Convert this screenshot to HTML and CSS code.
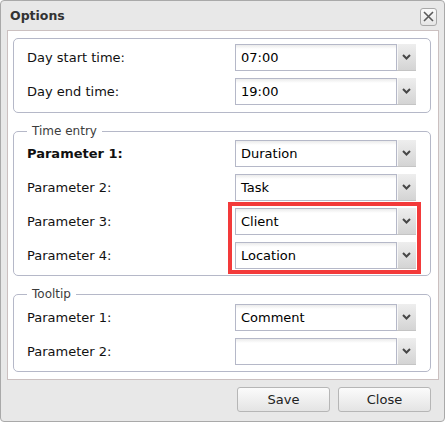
FILE: index.html
```html
<!DOCTYPE html>
<html>
<head>
<meta charset="utf-8">
<link rel="stylesheet" href="styles.css">
</head>
<body>
<div class="window">
  <div class="titlebar">
    <span class="title">Options</span>
    <span class="tool"><svg width="11" height="11" viewBox="0 0 11 11"><path d="M1 1 L10 10 M10 1 L1 10" stroke="#5a5a5a" stroke-width="1.6" fill="none"/></svg></span>
  </div>
  <div class="body">
    <fieldset class="group plain">
      <div class="rows">
        <div class="row"><label>Day start time:</label><div class="combo"><div class="field">07:00</div><div class="trigger"><svg width="9" height="6" viewBox="0 0 9 6"><path d="M1 1 L4.5 4.5 L8 1" stroke="#474747" stroke-width="2" fill="none"/></svg></div></div></div>
        <div class="row"><label>Day end time:</label><div class="combo"><div class="field">19:00</div><div class="trigger"><svg width="9" height="6" viewBox="0 0 9 6"><path d="M1 1 L4.5 4.5 L8 1" stroke="#474747" stroke-width="2" fill="none"/></svg></div></div></div>
      </div>
    </fieldset>
    <fieldset class="group entry">
      <legend>Time entry</legend>
      <div class="rows">
        <div class="row"><label class="strong">Parameter 1:</label><div class="combo"><div class="field">Duration</div><div class="trigger"><svg width="9" height="6" viewBox="0 0 9 6"><path d="M1 1 L4.5 4.5 L8 1" stroke="#474747" stroke-width="2" fill="none"/></svg></div></div></div>
        <div class="row"><label>Parameter 2:</label><div class="combo"><div class="field">Task</div><div class="trigger"><svg width="9" height="6" viewBox="0 0 9 6"><path d="M1 1 L4.5 4.5 L8 1" stroke="#474747" stroke-width="2" fill="none"/></svg></div></div></div>
        <div class="row"><label>Parameter 3:</label><div class="combo"><div class="field">Client</div><div class="trigger"><svg width="9" height="6" viewBox="0 0 9 6"><path d="M1 1 L4.5 4.5 L8 1" stroke="#474747" stroke-width="2" fill="none"/></svg></div></div></div>
        <div class="row"><label>Parameter 4:</label><div class="combo"><div class="field">Location</div><div class="trigger"><svg width="9" height="6" viewBox="0 0 9 6"><path d="M1 1 L4.5 4.5 L8 1" stroke="#474747" stroke-width="2" fill="none"/></svg></div></div></div>
      </div>
    </fieldset>
    <fieldset class="group tooltip">
      <legend>Tooltip</legend>
      <div class="rows">
        <div class="row"><label>Parameter 1:</label><div class="combo"><div class="field">Comment</div><div class="trigger"><svg width="9" height="6" viewBox="0 0 9 6"><path d="M1 1 L4.5 4.5 L8 1" stroke="#474747" stroke-width="2" fill="none"/></svg></div></div></div>
        <div class="row"><label>Parameter 2:</label><div class="combo"><div class="field"></div><div class="trigger"><svg width="9" height="6" viewBox="0 0 9 6"><path d="M1 1 L4.5 4.5 L8 1" stroke="#474747" stroke-width="2" fill="none"/></svg></div></div></div>
      </div>
    </fieldset>
  </div>
  <div class="footer">
    <button class="btn">Save</button>
    <button class="btn">Close</button>
  </div>
  <div class="highlight"></div>
</div>
</body>
</html>
```
FILE: styles.css
```css
html, body {
  margin: 0;
  padding: 0;
  background: #ffffff;
}
body {
  font-family: "DejaVu Sans", sans-serif;
}
.window {
  position: relative;
  width: 445px;
  height: 422px;
  box-sizing: border-box;
  border: 1px solid #a9a9a9;
  border-radius: 4px;
  background: #e8e8e8;
  display: flex;
  flex-direction: column;
}
.titlebar {
  height: 29px;
  display: flex;
  align-items: center;
  justify-content: space-between;
  padding: 0 7px 0 9px;
}
.title {
  font-weight: bold;
  font-size: 12.5px;
  color: #333333;
  margin-top: -1px;
}
.tool {
  width: 17px;
  height: 18px;
  box-sizing: border-box;
  border: 1px solid #a8a8a8;
  border-radius: 3px;
  background: linear-gradient(#fafafa, #e6e6e6);
  display: flex;
  align-items: center;
  justify-content: center;
  margin-top: 2px;
}
.body {
  margin: 0 5px 0 6px;
  height: 350px;
  box-sizing: border-box;
  border: 1px solid #cbc0c0;
  background: #ffffff;
  padding: 7px 7px 0 5px;
}
.group {
  margin: 0;
  border: 1px solid #b5b8c8;
  border-radius: 5px;
  padding: 5px 14px 7px 13px;
  min-width: 0;
}
.group + .group {
  margin-top: 11px;
}
.group legend {
  padding: 0 5px;
  font-size: 12px;
  line-height: 14px;
  color: #3c3c3c;
}
.group.entry {
  padding-top: 2px;
  padding-bottom: 6px;
}
.group.tooltip {
  padding-top: 3px;
  padding-bottom: 6px;
}
.rows {
  display: flex;
  flex-direction: column;
  gap: 7px;
}
.row {
  display: flex;
  align-items: center;
  justify-content: space-between;
  height: 27px;
}
.row label {
  font-size: 13px;
  color: #111111;
}
.row label.strong {
  font-weight: bold;
}
.combo {
  display: flex;
  width: 181px;
  height: 27px;
}
.field {
  width: 162px;
  box-sizing: border-box;
  border: 1px solid #b5b8c8;
  background: linear-gradient(#ebebeb, #ffffff 4px);
  font-size: 13px;
  color: #000000;
  padding-left: 5px;
  display: flex;
  align-items: center;
}
.trigger {
  width: 19px;
  box-sizing: border-box;
  background: linear-gradient(#eeeeee, #d4d4d4);
  border-bottom: 1px solid #c4c4c4;
  box-shadow: inset 1px 0 #f7f7f7;
  display: flex;
  align-items: center;
  justify-content: center;
}
.footer {
  flex: 1;
  display: flex;
  justify-content: flex-end;
  align-items: flex-start;
  gap: 8px;
  padding: 7px 13px 0 0;
}
.btn {
  width: 93px;
  height: 25px;
  padding: 0;
  border: 1px solid #b6b6b6;
  border-radius: 3px;
  background: linear-gradient(#fbfbfb, #e4e4e4);
  font-family: "DejaVu Sans", sans-serif;
  font-size: 13px;
  color: #222222;
}
.highlight {
  position: absolute;
  left: 227px;
  top: 201px;
  width: 193px;
  height: 72px;
  box-sizing: border-box;
  border: 4px solid #f33a3a;
}
```
